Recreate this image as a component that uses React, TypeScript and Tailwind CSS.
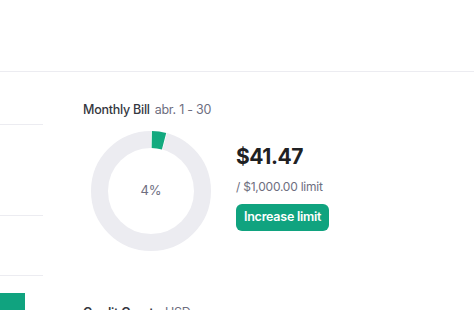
import React from "react";

const FONT = "font-['Inter',_'Liberation_Sans',_sans-serif]";

function Donut({ percent }: { percent: number }) {
  const r = 51.5;
  const c = 2 * Math.PI * r;
  const len = (percent / 100) * c;
  return (
    <div className="relative h-[120px] w-[120px]">
      <svg width="120" height="120" viewBox="0 0 120 120">
        <defs>
          <linearGradient id="g" x1="0" y1="0" x2="1" y2="1">
            <stop offset="0%" stopColor="#19c37d" />
            <stop offset="100%" stopColor="#10a37f" />
          </linearGradient>
        </defs>
        <circle cx="60" cy="60" r={r} fill="none" stroke="#ececf1" strokeWidth="17" />
        <circle
          cx="60"
          cy="60"
          r={r}
          fill="none"
          stroke="#ffffff"
          strokeWidth="17"
          strokeDasharray={`${len + 2} ${c}`}
          strokeDashoffset="1"
          transform="rotate(-90 60 60)"
        />
        <circle
          cx="60"
          cy="60"
          r={r}
          fill="none"
          stroke="url(#g)"
          strokeWidth="17"
          strokeDasharray={`${len - 0.5} ${c}`}
          strokeDashoffset="-0.8"
          transform="rotate(-90 60 60)"
        />
      </svg>
      <div className="absolute inset-0 flex items-center justify-center text-[13px] text-[#6e6e80]">
        {percent}%
      </div>
    </div>
  );
}

export default function App() {
  return (
    <div className={`${FONT} h-[310px] w-[474px] overflow-hidden bg-white text-[#353740]`}>
      <header className="h-[72px] border-b border-[#ececf1]" />

      <div className="flex">
        {/* sidebar, cut off on the left */}
        <aside className="flex w-[43px] flex-col">
          <div className="h-[53px] border-b border-[#ececf1]" />
          <div className="h-[91px] border-b border-[#ececf1]" />
          <div className="h-[60px] border-b border-[#ececf1]" />
          <div className="mt-[17px] h-[20px] w-[25px] bg-[#10a37f]" />
        </aside>

        <main className="flex-1 pl-[40px] pt-[29px]">
          <div className="flex items-baseline gap-[5px] text-[12.5px] tracking-[-0.02em]">
            <span className="font-medium text-[#353740]">Monthly Bill</span>
            <span className="text-[#6e6e80]">abr. 1 - 30</span>
          </div>

          <div className="mt-[11px] flex items-start">
            <div className="ml-[8px]">
              <Donut percent={4} />
            </div>
            <div className="ml-[25px] mt-[13px] flex flex-col items-start">
              <div className="text-[21px] font-bold leading-[26px] tracking-[-0.02em] text-[#202123]">
                $41.47
              </div>
              <div className="mt-[9px] text-[12px] leading-[16px] tracking-[-0.02em] text-[#6e6e80]">
                / $1,000.00 limit
              </div>
              <button className="mt-[9px] h-[27px] rounded-[6px] bg-[#10a37f] px-[8px] text-[12.5px] font-semibold tracking-[-0.02em] text-white">
                Increase limit
              </button>
            </div>
          </div>

          <div className="mt-[53px] flex items-baseline gap-[5px] text-[12.5px] tracking-[-0.02em]">
            <span className="font-semibold text-[#353740]">Credit Grants</span>
            <span className="text-[#6e6e80]">USD</span>
          </div>
        </main>
      </div>
    </div>
  );
}
